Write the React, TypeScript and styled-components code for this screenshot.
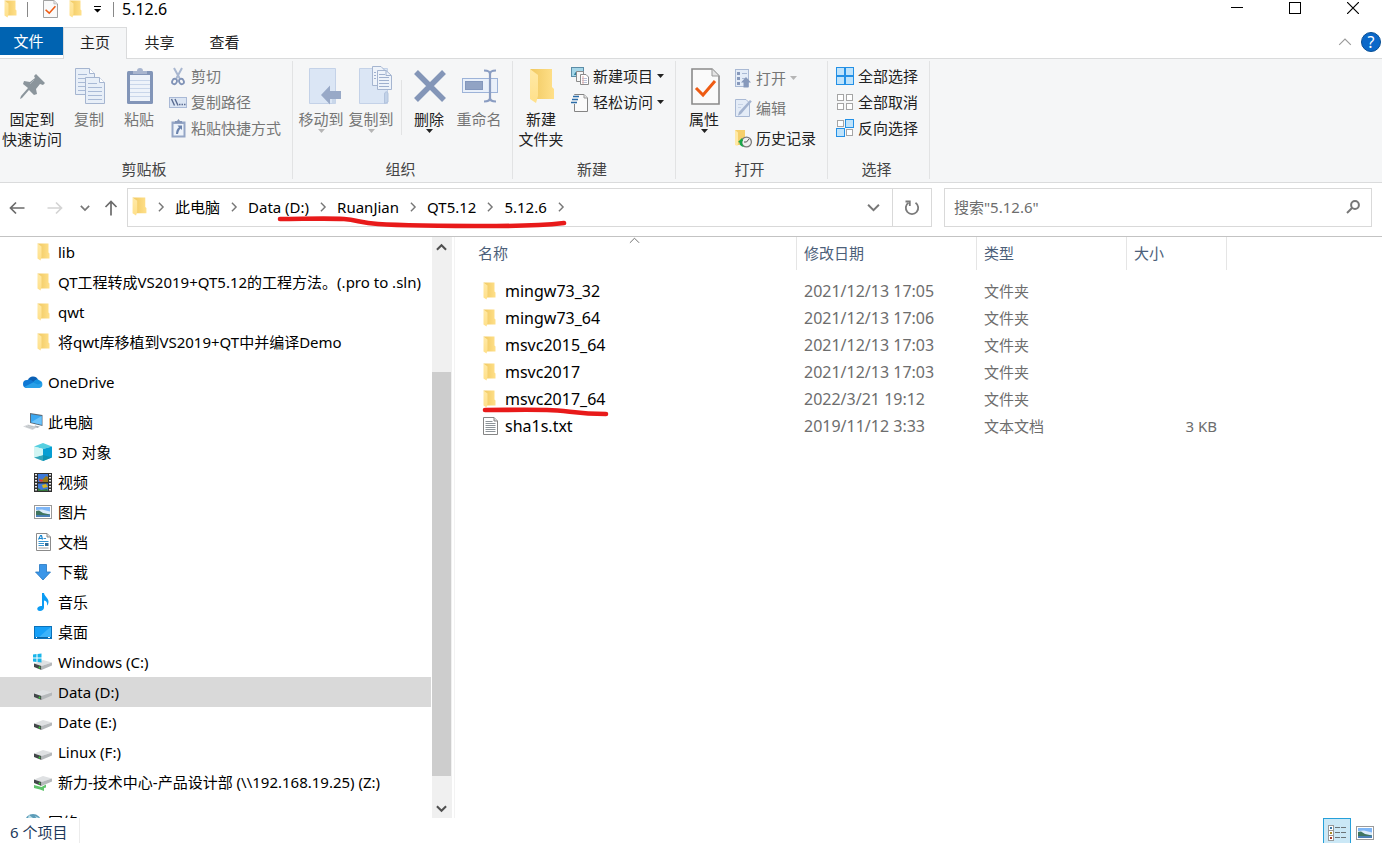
import React from 'react';
import styled, { createGlobalStyle } from 'styled-components';

const GlobalStyle = createGlobalStyle`
  *, *::before, *::after { box-sizing: border-box; }
  html, body { margin: 0; padding: 0; }
  body, button, input, table {
    font-family: "Noto Sans", "Noto Sans CJK SC", sans-serif;
    font-size: 15px;
    line-height: 20px;
    color: #000;
  }
  button { margin: 0; padding: 0; border: 0; background: none; }
  svg { display: block; flex: none; }
`;

/* ---------- layout ---------- */

const Window = styled.div`
  display: flex;
  flex-direction: column;
  height: 100vh;
  background: #fff;
  overflow: hidden;
`;

const TitleBar = styled.header`
  display: flex;
  align-items: flex-start;
  height: 27px;
  flex: none;
`;

const QuickAccess = styled.div`
  display: flex;
  align-items: center;
  height: 18px;
  padding-left: 4px;
`;

const QuickButton = styled.button<{ $w: number }>`
  display: flex;
  justify-content: center;
  width: ${(p) => p.$w}px;
`;

const QuickDivider = styled.span<{ $space: number }>`
  width: 1px;
  height: 15px;
  margin: 0 ${(p) => p.$space}px 0 10px;
  background: #888;
`;

const Title = styled.h1`
  margin: 0;
  font-size: 16px;
  font-weight: 400;
  line-height: 18px;
`;

const WindowControls = styled.div`
  display: flex;
  margin-left: auto;
`;

const ControlButton = styled.button`
  display: flex;
  justify-content: center;
  width: 58px;
  height: 27px;
  padding-top: 2px;
`;

const TabStrip = styled.nav`
  display: flex;
  height: 32px;
  flex: none;
  border-bottom: 1px solid #dadbdc;
`;

const FileTab = styled.button`
  width: 63px;
  height: 28px;
  background: #0063b1;
  color: #fff;
  padding-right: 6px;
`;

const Tab = styled.button<{ $active?: boolean }>`
  width: ${(p) => (p.$active ? 64 : 65)}px;
  height: 32px;
  padding-bottom: 4px;
  color: #222;
  border: solid ${(p) => (p.$active ? '#dadbdc' : 'transparent')};
  border-width: 1px 1px 0;
  background: ${(p) => (p.$active ? '#f5f6f7' : 'transparent')};
`;

const TabTools = styled.div`
  display: flex;
  align-items: center;
  gap: 9px;
  height: 30px;
  margin-left: auto;
`;

const HelpButton = styled.button`
  width: 20px;
  height: 20px;
  margin-right: 1px;
  border: 1px solid #084f94;
  border-radius: 50%;
  background: #0a68c9;
  color: #fff;
  font-size: 16px;
  line-height: 18px;
`;

const Ribbon = styled.section`
  display: flex;
  flex: none;
  padding: 2px 0 3px;
  background: #f5f6f7;
  border-bottom: 1px solid #dadbdc;
`;

const Group = styled.div`
  display: flex;
  flex-direction: column;
  padding-top: 2px;
  border-right: 1px solid #e2e3e4;
`;

const GroupBody = styled.div<{ $left?: number; $right?: number }>`
  display: flex;
  height: 96px;
  padding: 0 ${(p) => p.$right ?? 11}px 0 ${(p) => p.$left ?? 3}px;
`;

const GroupLabel = styled.div`
  padding-right: 4px;
  text-align: center;
  color: #444;
`;

const BigButton = styled.button<{ $w?: number; $dim?: boolean }>`
  display: flex;
  flex-direction: column;
  align-items: center;
  width: ${(p) => p.$w ?? 50}px;
  color: ${(p) => (p.$dim ? '#767676' : '#222')};
  white-space: nowrap;
`;

const BigIcon = styled.span`
  display: flex;
  align-items: center;
  justify-content: center;
  height: 46px;
  padding-left: 2px;
`;

const BodyDivider = styled.span`
  width: 1px;
  height: 55px;
  margin: 17px 2px 0 5px;
  background: #e2e3e4;
`;

const SmallList = styled.div`
  display: flex;
  flex-direction: column;
  padding-left: 5px;
`;

const SmallButton = styled.button<{ $dim?: boolean; $tall?: boolean }>`
  display: flex;
  align-items: center;
  gap: 4px;
  height: ${(p) => (p.$tall ? 30 : 26)}px;
  color: ${(p) => (p.$dim ? '#767676' : '#222')};
  white-space: nowrap;
`;

const SmallIcon = styled.span`
  display: flex;
  justify-content: center;
  width: 18px;
`;

const AddressRow = styled.div`
  display: flex;
  flex: none;
  padding: 5px 10px 9px 0;
  border-bottom: 1px solid #c3c3c3;
`;

const NavButtons = styled.div`
  display: flex;
  align-items: center;
  flex: none;
`;

const NavButton = styled.button<{ $w: number }>`
  display: flex;
  justify-content: center;
  width: ${(p) => p.$w}px;
`;

const AddressBox = styled.div`
  position: relative;
  display: flex;
  flex: 1;
  min-width: 0;
  height: 39px;
  padding-left: 4px;
  border: 1px solid #d9d9d9;
`;

const Crumbs = styled.div`
  display: flex;
  align-items: center;
  flex: 1;
  min-width: 0;
  padding-bottom: 2px;
  overflow: hidden;
`;

const Crumb = styled.a`
  color: #000;
  text-decoration: none;
  white-space: nowrap;
`;

const CrumbArrow = styled.span`
  display: flex;
  justify-content: center;
  width: 28px;
`;

const BoxButton = styled.button<{ $line?: boolean }>`
  display: flex;
  align-items: center;
  justify-content: center;
  width: 39px;
  border-left: 1px solid ${(p) => (p.$line ? '#d9d9d9' : 'transparent')};
`;

const SearchBox = styled.label`
  display: flex;
  align-items: center;
  width: 428px;
  height: 39px;
  margin-left: 12px;
  padding: 0 11px 2px 9px;
  border: 1px solid #d9d9d9;
`;

const SearchInput = styled.input`
  flex: 1;
  min-width: 0;
  padding: 0;
  border: 0;
  outline: 0;
  background: none;
  &::placeholder { color: #6d6d6d; opacity: 1; }
`;

const Main = styled.main`
  display: flex;
  flex: 1;
  min-height: 0;
`;

const Sidebar = styled.nav`
  width: 431px;
  flex: none;
  overflow: hidden;
`;

const TreeRow = styled.a<{ $level: number; $selected?: boolean; $gap?: boolean }>`
  display: flex;
  align-items: center;
  gap: 5px;
  height: 30px;
  margin-top: ${(p) => (p.$gap ? 10 : 0)}px;
  padding-left: ${(p) => (p.$level ? 33 : 23)}px;
  background: ${(p) => (p.$selected ? '#d9d9d9' : 'transparent')};
  color: #000;
  text-decoration: none;
  white-space: nowrap;
`;

const TreeIcon = styled.span`
  display: flex;
  justify-content: center;
  width: 20px;
`;

const ScrollBar = styled.div`
  display: flex;
  flex-direction: column;
  width: 20px;
  flex: none;
  margin-left: 1px;
  background: #f0f0f0;
`;

const ScrollButton = styled.button`
  display: flex;
  align-items: center;
  justify-content: center;
  height: 20px;
  padding-right: 2px;
`;

const Track = styled.div<{ $grow: number; $thumb?: boolean }>`
  flex: ${(p) => p.$grow} 1 0;
  margin-right: 1px;
  background: ${(p) => (p.$thumb ? '#cdcdcd' : 'transparent')};
`;

const Content = styled.section`
  flex: 1;
  min-width: 0;
  margin-left: 2px;
  border-left: 1px solid #f3f3f3;
  overflow: hidden;
`;

const FileTable = styled.table`
  width: 772px;
  table-layout: fixed;
  border-collapse: separate;
  border-spacing: 0;
  tbody::before { content: ""; display: block; height: 8px; }
`;

const HeadCell = styled.th<{ $first?: boolean }>`
  position: relative;
  height: 33px;
  padding: 0 0 2px ${(p) => (p.$first ? 23 : 7)}px;
  border-right: 1px solid #e5e5e5;
  color: #4c607a;
  font-weight: 400;
  text-align: left;
`;

const SortMark = styled.span`
  position: absolute;
  top: -2px;
  left: 51%;
`;

const Cell = styled.td<{ $size?: boolean }>`
  height: 27px;
  padding: 0 10px 2px 7px;
  color: #6d6d6d;
  text-align: ${(p) => (p.$size ? 'right' : 'left')};
  white-space: nowrap;
`;

const DateCell = styled(Cell)`
  padding-right: 0;
  font-size: 16px;
`;

const NameCell = styled.td`
  position: relative;
  height: 27px;
  padding: 0 0 2px 28px;
  font-size: 16px;
`;

const FileName = styled.span`
  display: flex;
  align-items: center;
  gap: 6px;
`;

const FileIcon = styled.span`
  display: flex;
  width: 16px;
`;

const PathMarker = styled.svg`
  position: absolute;
  left: 146px;
  top: 24px;
`;

const NameMarker = styled.svg`
  position: absolute;
  left: 26px;
  top: 19px;
`;

const StatusBar = styled.footer`
  display: flex;
  align-items: flex-start;
  height: 25px;
  flex: none;
  padding: 0 3px 0 10px;
  color: #1e395b;
  overflow: hidden;
`;

const StatusText = styled.span`
  padding-right: 12px;
  border-right: 1px solid #ececec;
  line-height: 28px;
`;

const ViewButtons = styled.div`
  display: flex;
  margin-left: auto;
`;

const ViewButton = styled.button<{ $on?: boolean }>`
  display: flex;
  align-items: center;
  justify-content: center;
  width: 28px;
  height: 29px;
  border: 1px solid ${(p) => (p.$on ? '#26a0da' : 'transparent')};
  background: ${(p) => (p.$on ? '#cbe8f6' : 'transparent')};
`;

/* ---------- icons ---------- */

const Folder = ({ w = 13, h = 18 }: { w?: number; h?: number }) => (
  <svg width={w} height={h} viewBox="0 0 26 36" preserveAspectRatio="none">
    <defs>
      <linearGradient id="folderBack" x1="0" x2="1" y1="0" y2="0">
        <stop offset="0" stopColor="#f0c860" />
        <stop offset="1" stopColor="#ffe08a" />
      </linearGradient>
      <linearGradient id="folderFlap" x1="0" x2="0" y1="0" y2="1">
        <stop offset="0" stopColor="#ffe9a6" />
        <stop offset="1" stopColor="#ffe08a" />
      </linearGradient>
    </defs>
    <path d="M1 1H23V19L25 21V31H6V10Z" fill="url(#folderBack)" />
    <path d="M1 1L9 7V28L7 35L1 31Z" fill="url(#folderFlap)" />
  </svg>
);

const Caret = ({ color = '#222' }: { color?: string }) => (
  <svg width="7" height="4" viewBox="0 0 7 4"><path d="M0 0H7L3.5 4Z" fill={color} /></svg>
);

const CheckDoc = ({ w, h }: { w: number; h: number }) => (
  <svg width={w} height={h} viewBox="0 0 29 37" preserveAspectRatio="none">
    <path d="M1 1H21L28 8V36H1Z" fill="#fafafa" stroke="#8a8a8a" strokeWidth="1.6" />
    <path d="M21 1V8H28" fill="#e4e4e4" stroke="#999" />
    <path d="M5 20L12 27L24 13" fill="none" stroke="#ee5b13" strokeWidth="3" />
  </svg>
);

const CustomizeMark = () => (
  <svg width="7" height="7" viewBox="0 0 7 7"><path d="M0 0H7V1H0ZM0 3H7L3.5 6.5Z" /></svg>
);

const Pin = () => (
  <svg width="28" height="28" viewBox="0 0 28 28">
    <path d="M17 2L26 11L24 13L21 12L17 17L18 22L15 23L10 18L3 26L1 27L2 24L9 16L4 12L5 9L11 10L16 6L15 4Z" fill="#8b959c" />
    <path d="M15 8L11 12" stroke="#aab2b8" />
  </svg>
);

const Page = ({ x, y }: { x: number; y: number }) => (
  <g transform={`translate(${x} ${y})`}>
    <path d="M.5 .5H14.5L19.5 5.5V26.5H.5Z" fill="#e8eff8" stroke="#a5b5d0" />
    <path d="M14.5 .5V5.5H19.5" fill="#fff" stroke="#a5b5d0" />
    <path d="M3 6.500H12M3 10.500H17M3 14.500H17M3 18.500H17M3 22.500H17" stroke="#a9bad6" />
  </g>
);

const CopyIcon = () => (
  <svg width="32" height="38" viewBox="0 0 32 38"><Page x={1} y={1} /><Page x={11} y={10} /></svg>
);

const PasteIcon = () => (
  <svg width="28" height="38" viewBox="0 0 28 38">
    <rect x="1" y="4" width="26" height="33" rx="1.500" fill="#8295b8" />
    <rect x="4" y="8" width="20" height="26" fill="#eef3fa" />
    <path d="M4 13.500H24M4 17.500H24M4 21.500H24M4 25.500H24M4 29.500H24" stroke="#c9d6ea" />
    <path d="M7 7V4H11A3 3 0 0 1 17 4H21V7Z" fill="#a8b5cf" />
  </svg>
);

const ScissorsIcon = () => (
  <svg width="14" height="19" viewBox="0 0 14 19" fill="none">
    <path d="M3 1L9 12M11 1L5 12" stroke="#a9b7d0" strokeWidth="2" />
    <ellipse cx="3.500" cy="14.500" rx="2.300" ry="2.800" stroke="#8093b7" strokeWidth="1.800" transform="rotate(25 3.500 14.500)" />
    <ellipse cx="10.500" cy="14.500" rx="2.300" ry="2.800" stroke="#8093b7" strokeWidth="1.800" transform="rotate(-25 10.500 14.500)" />
  </svg>
);

const PathIcon = () => (
  <svg width="18" height="11" viewBox="0 0 18 11">
    <rect x=".5" y=".5" width="17" height="10" fill="#dbe5f3" stroke="#a9b9d6" />
    <path d="M2.500 2L5.500 8.500M6 2L9 8.500" stroke="#5a6c92" strokeWidth="1.400" />
    <path d="M10 7.500H11.500M12.500 7.500H14M15 7.500H16.500" stroke="#5a6c92" strokeWidth="1.400" />
  </svg>
);

const PasteLinkIcon = () => (
  <svg width="15" height="19" viewBox="0 0 15 19">
    <rect x=".5" y="2.500" width="14" height="16" fill="#95a6c6" />
    <rect x="2.500" y="5" width="10" height="11.500" fill="#eef3fa" />
    <path d="M4 4V2H6L7.500 0L9 2H11V4Z" fill="#8496b8" />
    <path d="M11 6.500V11L9.500 9.500C8 11 7.500 13 7 15H5C5 12 6 10 8 8.300L6.500 6.500Z" fill="#6b83ad" />
  </svg>
);

const MoveIcon = () => (
  <svg width="40" height="40" viewBox="-4 0 40 40">
    <path d="M3.500 2.500H29.500V37.500H3.500Z" fill="#dbe6f5" stroke="#c4d2e8" />
    <path d="M26 31V37.500H29.500V31Z" fill="#c9d7ea" />
    <path d="M15 29L24 19.500V25H35V33H24V38.500Z" fill="#98a9c7" />
  </svg>
);

const CopyToIcon = () => (
  <svg width="40" height="40" viewBox="-4 0 40 40">
    <path d="M3.500 2.500H31.500V37.500H3.500Z" fill="#dbe6f5" stroke="#c4d2e8" />
    <path d="M28.500 28C29 25 32 25 32 28V36L28.500 37.500Z" fill="#c2d2e8" stroke="#b2c3dd" />
    <g transform="translate(15 0)">
      <path d="M1.500 .5H10L14 4.500V19.500H1.500Z" fill="#eef3fa" stroke="#a5b5d0" />
      <path d="M6.500 4.500H15L20.500 9.500V23.500H6.500Z" fill="#eef3fa" stroke="#a5b5d0" />
      <path d="M15 4.500V9.500H20M3 6.500H5M3 9.500H5M3 12.500H5M8 8.500H14M8 11.500H18M8 14.500H18M8 17.500H18M8 20.500H18" stroke="#9fb0ce" fill="none" />
    </g>
  </svg>
);

const DeleteIcon = () => (
  <svg width="32" height="32" viewBox="0 0 32 32"><path d="M2 2L30 30M30 2L2 30" stroke="#8496b8" strokeWidth="5.500" /></svg>
);

const RenameIcon = () => (
  <svg width="38" height="34" viewBox="0 0 38 34" fill="none">
    <rect x="1.500" y="9.500" width="35" height="14" fill="#e9f0fa" stroke="#9db3d8" />
    <rect x="4.500" y="12.500" width="17" height="8" fill="#91a3c4" stroke="#8397bd" />
    <path d="M23 1.500C26 1.500 29 2 29 5V29C29 32 26 32.500 23 32.500M35 1.500C32 1.500 29 2 29 5M29 29C29 32 32 32.500 35 32.500" stroke="#8a9dc2" strokeWidth="2.200" />
  </svg>
);

const NewItemIcon = () => (
  <svg width="18" height="18" viewBox="0 0 18 18">
    <rect x=".5" y=".5" width="12" height="9" fill="#a5d6e8" stroke="#5b8da8" />
    <path d="M3 8C5 2.500 7 5 8 8Z" fill="#2f7f9e" />
    <path d="M5.500 4.500H12.500V14.500H5.500Z" fill="#f6f6f6" stroke="#8b8b8b" />
    <path d="M9.500 7.500H15L17.500 10V17.500H9.500Z" fill="#fff" stroke="#8b8b8b" />
    <path d="M11 11.500H16M11 13.500H16M11 15.500H16" stroke="#b9c1d8" />
    <path d="M12 9V17" stroke="#e3a9a4" />
  </svg>
);

const EasyAccessIcon = () => (
  <svg width="18" height="19" viewBox="0 0 18 19">
    <path d="M3.500 1.500H13L16.500 5V18.500H3.500Z" fill="#fafafa" stroke="#848484" />
    <path d="M13 1.500V5H16.500" fill="#e5e5e5" stroke="#999" />
    <path d="M3 3.500H8M1 6.500H7M0 9.500H6" stroke="#f5f6f7" strokeWidth="3" />
    <path d="M2 3.500H8M1 6.500H7M0 9.500H6" stroke="#2b6ca8" strokeWidth="1.400" />
  </svg>
);

const OpenIcon = () => (
  <svg width="16" height="19" viewBox="0 0 16 19">
    <rect x=".5" y=".5" width="13" height="17" fill="#e4ecf7" stroke="#a9b9d4" />
    <path d="M2 3H5V6H2ZM2 8H5V11H2ZM2 13H5V16H2Z" fill="#8799bb" />
    <path d="M7 4.500H12M7 9.500H12" stroke="#a9b9d4" />
    <path d="M11 8L16 13.500H13.500V18.500H8.500V13.500H6Z" fill="#8799bb" />
  </svg>
);

const EditIcon = () => (
  <svg width="17" height="18" viewBox="0 0 17 18">
    <path d="M.5 .5H11L14.500 4V17.500H.5Z" fill="#e4ecf7" stroke="#a9b9d4" />
    <path d="M3 5.500H8M3 8.500H6" stroke="#c8d4e6" />
    <path d="M15 1L16.800 2.500L6 15L3 16.800L4 13Z" fill="#a3b3cf" />
  </svg>
);

const HistoryIcon = () => (
  <svg width="18" height="19" viewBox="0 0 18 19">
    <path d="M1 1H11V16H3Z" fill="#f5cf6b" />
    <path d="M1 1L4 3.500V14L3.500 17L1 16Z" fill="#ffe9a6" />
    <circle cx="12.500" cy="13" r="4.900" fill="#eee" stroke="#777" strokeWidth="1.200" />
    <path d="M12.500 13L15 10M12.500 13H10" stroke="#555" />
    <path d="M4 13L8 9L9 11.500C7.500 13 8 16 10 18C7 17.500 5.500 16 5.500 13.500Z" fill="#19a64a" />
  </svg>
);

const Squares = ({ on }: { on: number[] }) => (
  <svg width="18" height="18" viewBox="0 0 18 18">
    {[0, 1, 2, 3].map((i) => {
      const lit = on.includes(i);
      const x = (i % 2) * 9;
      const y = i > 1 ? 9 : 0;
      return (
        <rect
          key={i}
          x={x + (lit ? 0.5 : 1.5)}
          y={y + (lit ? 0.5 : 1.5)}
          width={lit ? 8 : 6}
          height={lit ? 8 : 6}
          fill={lit ? '#bfe3fb' : '#fff'}
          stroke={lit ? '#2390e6' : '#a5a5a5'}
        />
      );
    })}
  </svg>
);

const Arrow = ({ turn, color, h = 16 }: { turn: number; color: string; h?: number }) => (
  <svg width={h} height={h} viewBox="0 0 16 16">
    <path d="M15.500 8H1.500M7 2.500L1.500 8L7 13.500" fill="none" stroke={color} strokeWidth="1.700" transform={`rotate(${turn} 8 8)`} />
  </svg>
);

const Chevron = ({ dir, w, color, weight = 1 }: { dir: 'up' | 'down' | 'right'; w: number; color: string; weight?: number }) => {
  const d = { up: 'M1 8.500L6 3.500L11 8.500', down: 'M1 3.500L6 8.500L11 3.500', right: 'M3.500 1L8.500 6L3.500 11' }[dir];
  return (
    <svg width={w} height={w} viewBox="0 0 12 12">
      <path d={d} fill="none" stroke={color} strokeWidth={weight} />
    </svg>
  );
};

const RefreshIcon = () => (
  <svg width="16" height="16" viewBox="0 0 16 16" fill="none" stroke="#7a7a7a" strokeWidth="1.800">
    <path d="M11.500 2.800A6.200 6.200 0 1 1 4.500 2.800" /><path d="M1.500 1.500H5.800V6" />
  </svg>
);

const SearchIcon = () => (
  <svg width="14" height="14" viewBox="0 0 14 14" fill="none" stroke="#777" strokeWidth="2">
    <circle cx="9" cy="5" r="3.900" /><path d="M6 8L1 13" />
  </svg>
);

const OneDriveIcon = () => (
  <svg width="20" height="14" viewBox="0 0 20 14">
    <path d="M5 5A5.500 5.500 0 0 1 15 4.500L14 9H4Z" fill="#0a5fb4" />
    <path d="M4 5C7 4 9 5 12 8L4 13A4 4 0 0 1 4 5Z" fill="#0f78d4" />
    <path d="M10 7.500C12 5 14.500 3.800 16 5.200A4 4 0 0 1 16.500 13H4L1.500 11.800Z" fill="#28a0e8" />
    <path d="M10 7.500C12 5 14.500 3.800 16 5.200L18.500 8L15 9.500Z" fill="#1490df" />
  </svg>
);

const ComputerIcon = () => (
  <svg width="20" height="18" viewBox="0 0 20 18">
    <path d="M7 0L19.500 2V13L7 10Z" fill="#5c6b78" />
    <path d="M8 1.200L18.700 3V11.700L8 9.200Z" fill="#3ba8f2" />
    <path d="M8 9.200L18.700 3V11.700Z" fill="#6cc3fa" />
    <path d="M12 12.500L17 13.700L14 15L11 14Z" fill="#9aa3aa" />
    <path d="M0 13.500L5 11.500L14.500 14L9.500 17Z" fill="#d5d8db" />
    <path d="M3 13.500L10.500 15.500M5 12.500L12.500 14.500" stroke="#aeb3b7" strokeWidth=".6" />
  </svg>
);

const CubeIcon = () => (
  <svg width="18" height="18" viewBox="0 0 18 18">
    <path d="M0 3.500L9 0L18 3.500L9 6Z" fill="#56cfe0" />
    <path d="M0 3.500L9 6V18L0 14.500Z" fill="#a5ecee" />
    <path d="M18 3.500L9 6V18L18 14.500Z" fill="#069fd3" />
    <path d="M0 14.500L9 12L18 14.500L9 18Z" fill="#0d8da8" opacity=".75" />
    <path d="M0 3.500L9 6V12L0 14.500Z" fill="#d1f5f3" />
  </svg>
);

const VideoIcon = () => (
  <svg width="18" height="19" viewBox="0 0 18 19">
    <path d="M0 0H18V19H0Z" fill="#2f2f2f" />
    <path d="M2 1V19M16 1V19" stroke="#fff" strokeWidth="1.800" strokeDasharray="1.600 1.400" />
    <path d="M4 1H14V9H4ZM4 10.500H14V18H4Z" fill="#3d79d8" />
    <path d="M4 5L8 7L12 3L14 4V9H9Z" fill="#9a7b1a" />
    <path d="M5 6L9 7L8 9L5 8Z" fill="#e2402d" />
    <path d="M8 12L12 11L14 14L9 15Z" fill="#d7b520" />
    <path d="M4 15L7 17L13 16L14 18H4Z" fill="#36783a" />
  </svg>
);

const PictureIcon = () => (
  <svg width="18" height="14" viewBox="0 0 18 14">
    <rect x=".5" y=".5" width="17" height="13" fill="#fff" stroke="#9a9a9a" />
    <path d="M2 2H16V12H2Z" fill="#7eb6f6" />
    <path d="M2 5L8 4.500L16 6.500V9H2Z" fill="#dcecfb" />
    <path d="M2 6L5 5.500L9 8L16 9.500V10H2Z" fill="#3f7560" />
    <path d="M2 10H16V12H2Z" fill="#4a7fb5" />
  </svg>
);

const DocIcon = () => (
  <svg width="15" height="18" viewBox="0 0 15 18">
    <path d="M.5 .5H11L14.500 4V17.500H.5Z" fill="#fff" stroke="#8b8b8b" />
    <path d="M11 .5V4H14.500" fill="#ddd" stroke="#8b8b8b" />
    <path d="M2.500 6.500L4.500 2.500H5.500L6.500 6.500M3.500 5.500H6" stroke="#1b88d2" fill="none" strokeWidth="1.200" />
    <path d="M7.500 5.500H10M2.500 8.500H12.500M2.500 10.500H8M2.500 12.500H8" stroke="#3794d0" />
    <path d="M9 10H12.500V13H9Z" fill="#2f6d9a" />
    <path d="M2.500 15H12.500" stroke="#a0a0a0" />
  </svg>
);

const DownloadIcon = () => (
  <svg width="16" height="17" viewBox="0 0 16 17">
    <path d="M4.500 .5H11.500V8H15.500L8 16L.5 8H4.500Z" fill="#3b96e8" stroke="#2577c2" strokeWidth=".8" />
  </svg>
);

const MusicIcon = () => (
  <svg width="12" height="18" viewBox="0 0 12 18">
    <path d="M5 0H7C7.500 3.500 11.500 5 11.500 8.500C11.500 10.500 10.800 12 10 12.500C10.500 9.500 9.500 8 7 7.500V14.500C7 16.500 5 18 3 18C1 18 0 16.800 .3 15.300C.7 13.600 3 12.500 5 13Z" fill="#0c9cf4" />
  </svg>
);

const DesktopIcon = () => (
  <svg width="18" height="13" viewBox="0 0 18 13">
    <rect x=".5" y=".5" width="17" height="12" fill="#16a0f8" stroke="#0b72ba" />
    <path d="M17 1V12H4L13 4Z" fill="#3bb3fb" />
    <path d="M1 11.500H17" stroke="#0b66a6" />
    <path d="M2 11.500H3M14 11.500H16" stroke="#fff" />
  </svg>
);

const DriveIcon = ({ kind }: { kind?: 'windows' | 'network' }) => (
  <svg width="20" height="18" viewBox="0 0 20 18">
    <g transform={kind === 'network' ? 'translate(0 -2)' : 'translate(0 2)'}>
      <path d="M1 8.500L10 5L19 7.500L8.500 11Z" fill="#dfe1e3" />
      <path d="M1 8.500L8.500 11V15L1 12Z" fill="#43474a" />
      <path d="M8.500 11L19 7.500V10.500L8.500 15Z" fill="#b5b8bb" />
      <circle cx="6.500" cy="12.500" r=".9" fill="#3bd13b" />
    </g>
    {kind === 'windows' && (
      <path d="M0 1.500L3.500 1V4.500H0ZM4.500 1L8.500 .4V4.500H4.500ZM0 5.500H3.500V9L0 8.500ZM4.500 5.500H8.500V9.600L4.500 9Z" fill="#19b5ea" />
    )}
    {kind === 'network' && <path d="M1 12L8.500 14L13 11.500V14.500L11 15V18L7 16.500L1 15Z" fill="#5fc46b" />}
  </svg>
);

const NetworkIcon = () => (
  <svg width="18" height="18" viewBox="0 0 18 18">
    <circle cx="9" cy="9" r="8" fill="#5c9cb8" />
    <path d="M5 2L9 5L7 9L3 8ZM11 3L15 5L14 8Z" fill="#bce0ea" />
  </svg>
);

const TextFileIcon = () => (
  <svg width="15" height="18" viewBox="0 0 15 18">
    <path d="M.5 .5H11L14.500 4V17.500H.5Z" fill="#fff" stroke="#858585" />
    <path d="M11 .5V4H14.500" fill="#ddd" stroke="#858585" />
    <path d="M2.500 4.500H9.500M2.500 6.500H12.500M2.500 8.500H12.500M2.500 10.500H12.500M2.500 12.500H12.500M2.500 14.500H12.500" stroke="#8d9499" />
  </svg>
);

const DetailsIcon = () => (
  <svg width="18" height="16" viewBox="0 0 18 16">
    {['#3b78a8', '#a88a28', '#a83a28'].map((c, i) => (
      <g key={c} transform={`translate(0 ${i * 5})`}>
        <rect x=".5" y=".5" width="5" height="5" fill="#fff" stroke="#999" />
        <rect x="2" y="2" width="2" height="2" fill={c} />
        <path d="M7 2.500H12M13 2.500H18" stroke="#6c7478" />
      </g>
    ))}
  </svg>
);

/* ---------- data ---------- */

type TreeItem = { label: string; icon: React.ReactNode; level: number; gap?: boolean; selected?: boolean };

const tree: TreeItem[] = [
  { label: 'lib', icon: <Folder />, level: 1 },
  { label: 'QT工程转成VS2019+QT5.12的工程方法。(.pro to .sln)', icon: <Folder />, level: 1 },
  { label: 'qwt', icon: <Folder />, level: 1 },
  { label: '将qwt库移植到VS2019+QT中并编译Demo', icon: <Folder />, level: 1 },
  { label: 'OneDrive', icon: <OneDriveIcon />, level: 0, gap: true },
  { label: '此电脑', icon: <ComputerIcon />, level: 0, gap: true },
  { label: '3D 对象', icon: <CubeIcon />, level: 1 },
  { label: '视频', icon: <VideoIcon />, level: 1 },
  { label: '图片', icon: <PictureIcon />, level: 1 },
  { label: '文档', icon: <DocIcon />, level: 1 },
  { label: '下载', icon: <DownloadIcon />, level: 1 },
  { label: '音乐', icon: <MusicIcon />, level: 1 },
  { label: '桌面', icon: <DesktopIcon />, level: 1 },
  { label: 'Windows (C:)', icon: <DriveIcon kind="windows" />, level: 1 },
  { label: 'Data (D:)', icon: <DriveIcon />, level: 1, selected: true },
  { label: 'Date (E:)', icon: <DriveIcon />, level: 1 },
  { label: 'Linux (F:)', icon: <DriveIcon />, level: 1 },
  { label: '新力-技术中心-产品设计部 (\\\\192.168.19.25) (Z:)', icon: <DriveIcon kind="network" />, level: 1 },
  { label: '网络', icon: <NetworkIcon />, level: 0, gap: true },
];

const files = [
  { name: 'mingw73_32', date: '2021/12/13 17:05', type: '文件夹', size: '' },
  { name: 'mingw73_64', date: '2021/12/13 17:06', type: '文件夹', size: '' },
  { name: 'msvc2015_64', date: '2021/12/13 17:03', type: '文件夹', size: '' },
  { name: 'msvc2017', date: '2021/12/13 17:03', type: '文件夹', size: '' },
  { name: 'msvc2017_64', date: '2022/3/21 19:12', type: '文件夹', size: '', marked: true },
  { name: 'sha1s.txt', date: '2019/11/12 3:33', type: '文本文档', size: '3 KB' },
];

const crumbs = ['此电脑', 'Data (D:)', 'RuanJian', 'QT5.12', '5.12.6'];

/* ---------- parts ---------- */

type ButtonProps = { icon: React.ReactNode; lines: string[]; w?: number; dim?: boolean; menu?: boolean };

const Big = ({ icon, lines, w, dim, menu }: ButtonProps) => (
  <BigButton $w={w} $dim={dim}>
    <BigIcon>{icon}</BigIcon>
    {lines.map((l) => <span key={l}>{l}</span>)}
    {menu && <Caret color={dim ? '#b5b5b5' : '#222'} />}
  </BigButton>
);

type SmallProps = { icon: React.ReactNode; label: string; dim?: boolean; tall?: boolean; menu?: boolean };

const Small = ({ icon, label, dim, tall, menu }: SmallProps) => (
  <SmallButton $dim={dim} $tall={tall}>
    <SmallIcon>{icon}</SmallIcon>
    <span>{label}</span>
    {menu && <Caret color={dim ? '#b5b5b5' : '#222'} />}
  </SmallButton>
);

export default function App() {
  return (
    <Window lang="zh-CN">
      <GlobalStyle />
      <TitleBar>
        <QuickAccess>
          <Folder />
          <QuickDivider $space={15} />
          <QuickButton $w={15} aria-label="属性"><CheckDoc w={15} h={18} /></QuickButton>
          <QuickButton $w={34} aria-label="新建文件夹"><Folder /></QuickButton>
          <QuickButton $w={11} aria-label="自定义快速访问工具栏"><CustomizeMark /></QuickButton>
          <QuickDivider $space={8} />
        </QuickAccess>
        <Title>5.12.6</Title>
        <WindowControls>
          <ControlButton aria-label="最小化">
            <svg width="12" height="12" viewBox="0 0 12 12"><path d="M0 5.500H12" stroke="#000" /></svg>
          </ControlButton>
          <ControlButton aria-label="最大化">
            <svg width="12" height="12" viewBox="0 0 12 12"><rect x=".5" y=".5" width="11" height="11" fill="none" stroke="#000" /></svg>
          </ControlButton>
          <ControlButton aria-label="关闭">
            <svg width="12" height="12" viewBox="0 0 12 12"><path d="M0 0L12 12M12 0L0 12" stroke="#000" strokeWidth="1.200" /></svg>
          </ControlButton>
        </WindowControls>
      </TitleBar>

      <TabStrip>
        <FileTab>文件</FileTab>
        <Tab $active>主页</Tab>
        <Tab>共享</Tab>
        <Tab>查看</Tab>
        <TabTools>
          <button aria-label="最小化功能区"><Chevron dir="up" w={14} color="#9a9a9a" /></button>
          <HelpButton aria-label="帮助">?</HelpButton>
        </TabTools>
      </TabStrip>

      <Ribbon>
        <Group>
          <GroupBody $left={0}>
            <Big w={64} icon={<Pin />} lines={['固定到', '快速访问']} />
            <Big dim icon={<CopyIcon />} lines={['复制']} />
            <Big dim icon={<PasteIcon />} lines={['粘贴']} />
            <SmallList>
              <Small dim icon={<ScissorsIcon />} label="剪切" />
              <Small dim icon={<PathIcon />} label="复制路径" />
              <Small dim icon={<PasteLinkIcon />} label="粘贴快捷方式" />
            </SmallList>
          </GroupBody>
          <GroupLabel>剪贴板</GroupLabel>
        </Group>
        <Group>
          <GroupBody $right={8}>
            <Big dim menu icon={<MoveIcon />} lines={['移动到']} />
            <Big dim menu icon={<CopyToIcon />} lines={['复制到']} />
            <BodyDivider />
            <Big menu icon={<DeleteIcon />} lines={['删除']} />
            <Big dim icon={<RenameIcon />} lines={['重命名']} />
          </GroupBody>
          <GroupLabel>组织</GroupLabel>
        </Group>
        <Group>
          <GroupBody>
            <Big icon={<Folder w={26} h={36} />} lines={['新建', '文件夹']} />
            <SmallList>
              <Small menu icon={<NewItemIcon />} label="新建项目" />
              <Small menu icon={<EasyAccessIcon />} label="轻松访问" />
            </SmallList>
          </GroupBody>
          <GroupLabel>新建</GroupLabel>
        </Group>
        <Group>
          <GroupBody>
            <Big menu icon={<CheckDoc w={29} h={37} />} lines={['属性']} />
            <SmallList>
              <Small dim tall menu icon={<OpenIcon />} label="打开" />
              <Small dim tall icon={<EditIcon />} label="编辑" />
              <Small tall icon={<HistoryIcon />} label="历史记录" />
            </SmallList>
          </GroupBody>
          <GroupLabel>打开</GroupLabel>
        </Group>
        <Group>
          <GroupBody>
            <SmallList>
              <Small icon={<Squares on={[0, 1, 2, 3]} />} label="全部选择" />
              <Small icon={<Squares on={[]} />} label="全部取消" />
              <Small icon={<Squares on={[1, 2]} />} label="反向选择" />
            </SmallList>
          </GroupBody>
          <GroupLabel>选择</GroupLabel>
        </Group>
      </Ribbon>

      <AddressRow>
        <NavButtons>
          <NavButton $w={34} aria-label="后退"><Arrow turn={0} color="#6b6b6b" /></NavButton>
          <NavButton $w={42} aria-label="前进"><Arrow turn={180} color="#d4d4d4" /></NavButton>
          <NavButton $w={18} aria-label="最近的位置"><Chevron dir="down" w={10} color="#777" weight={2} /></NavButton>
          <NavButton $w={33} aria-label="上移"><Arrow turn={90} color="#6b6b6b" /></NavButton>
        </NavButtons>
        <AddressBox>
          <Crumbs>
            <Folder w={15} h={19} />
            <CrumbArrow><Chevron dir="right" w={10} color="#777" weight={1.7} /></CrumbArrow>
            {crumbs.map((c) => (
              <React.Fragment key={c}>
                <Crumb href="#">{c}</Crumb>
                <CrumbArrow><Chevron dir="right" w={10} color="#777" weight={1.7} /></CrumbArrow>
              </React.Fragment>
            ))}
          </Crumbs>
          <BoxButton aria-label="以前的位置"><Chevron dir="down" w={13} color="#777" weight={1.8} /></BoxButton>
          <BoxButton $line aria-label="刷新"><RefreshIcon /></BoxButton>
          <PathMarker width="296" height="18" viewBox="0 0 296 18" fill="none" stroke="#e81a1a" strokeWidth="4.600" strokeLinecap="round" strokeLinejoin="round" aria-hidden>
            <path d="M6 6C28 6 52 5 70 6C84 7 86 10 104 11C134 13 180 13 222 13C252 13 272 12 290 10" />
          </PathMarker>
        </AddressBox>
        <SearchBox>
          <SearchInput type="text" placeholder={'搜索"5.12.6"'} aria-label="搜索" />
          <SearchIcon />
        </SearchBox>
      </AddressRow>

      <Main>
        <Sidebar>
          {tree.map((t) => (
            <TreeRow key={t.label} href="#" $level={t.level} $gap={t.gap} $selected={t.selected}>
              <TreeIcon>{t.icon}</TreeIcon>
              <span>{t.label}</span>
            </TreeRow>
          ))}
        </Sidebar>
        <ScrollBar>
          <ScrollButton aria-label="向上滚动"><Chevron dir="up" w={11} color="#505050" weight={2.2} /></ScrollButton>
          <Track $grow={115} />
          <Track $grow={404} $thumb />
          <Track $grow={22} />
          <ScrollButton aria-label="向下滚动"><Chevron dir="down" w={11} color="#505050" weight={2.2} /></ScrollButton>
        </ScrollBar>
        <Content>
          <FileTable>
            <colgroup>
              <col style={{ width: 342 }} />
              <col style={{ width: 180 }} />
              <col style={{ width: 150 }} />
              <col style={{ width: 100 }} />
            </colgroup>
            <thead>
              <tr>
                <HeadCell $first>
                  名称
                  <SortMark><Chevron dir="up" w={11} color="#666" /></SortMark>
                </HeadCell>
                <HeadCell>修改日期</HeadCell>
                <HeadCell>类型</HeadCell>
                <HeadCell>大小</HeadCell>
              </tr>
            </thead>
            <tbody>
              {files.map((f) => (
                <tr key={f.name}>
                  <NameCell>
                    <FileName>
                      <FileIcon>{f.size ? <TextFileIcon /> : <Folder />}</FileIcon>
                      {f.name}
                    </FileName>
                    {f.marked && (
                      <NameMarker width="130" height="14" viewBox="0 0 130 14" fill="none" stroke="#e81a1a" strokeWidth="4.600" strokeLinecap="round" aria-hidden>
                        <path d="M4 5C26 5 46 4.500 66 5C88 5.500 94 9 125 9" />
                      </NameMarker>
                    )}
                  </NameCell>
                  <DateCell>{f.date}</DateCell>
                  <Cell>{f.type}</Cell>
                  <Cell $size>{f.size}</Cell>
                </tr>
              ))}
            </tbody>
          </FileTable>
        </Content>
      </Main>

      <StatusBar>
        <StatusText>6 个项目</StatusText>
        <ViewButtons>
          <ViewButton $on aria-label="详细信息"><DetailsIcon /></ViewButton>
          <ViewButton aria-label="大图标"><PictureIcon /></ViewButton>
        </ViewButtons>
      </StatusBar>
    </Window>
  );
}
